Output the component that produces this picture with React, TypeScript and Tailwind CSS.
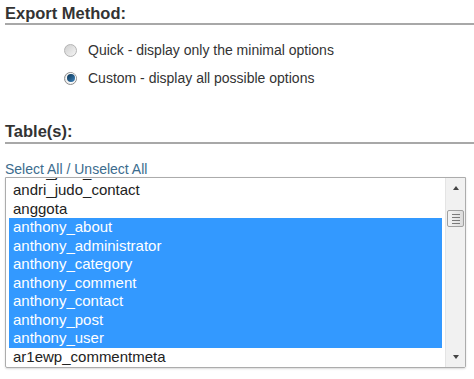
import React from "react";

const TABLES = [
  { name: "andri_judo_about", selected: false },
  { name: "andri_judo_contact", selected: false },
  { name: "anggota", selected: false },
  { name: "anthony_about", selected: true },
  { name: "anthony_administrator", selected: true },
  { name: "anthony_category", selected: true },
  { name: "anthony_comment", selected: true },
  { name: "anthony_contact", selected: true },
  { name: "anthony_post", selected: true },
  { name: "anthony_user", selected: true },
  { name: "ar1ewp_commentmeta", selected: false },
];

function Radio({ checked }: { checked?: boolean }) {
  return (
    <span
      className={`w-[13px] h-[13px] rounded-full border flex items-center justify-center shrink-0 ${
        checked
          ? "border-[#8c8c8c] bg-gradient-to-br from-[#e2e2e2] to-[#fafafa]"
          : "border-[#b4b4b4] bg-gradient-to-br from-[#cfcfcf] to-[#f6f6f6]"
      }`}
    >
      {checked && (
        <span className="w-[8px] h-[8px] rounded-full bg-gradient-to-br from-[#0c3554] to-[#3f86c0] shadow-[0_0_0_1px_rgba(255,255,255,0.8)]" />
      )}
    </span>
  );
}

function Scrollbar() {
  return (
    <div className="w-[20px] h-full bg-[#f1f1f1] border-l border-[#e4e4e4] flex flex-col items-center">
      <div className="h-[20px] w-full flex items-center justify-center">
        <span className="w-0 h-0 border-l-[3px] border-r-[3px] border-b-[4px] border-l-transparent border-r-transparent border-b-[#444]" />
      </div>
      <div className="mt-[12px] w-[17px] h-[17px] rounded-[2px] border border-[#a0a0a0] bg-gradient-to-r from-[#f4f4f4] to-[#dcdcdc] flex flex-col items-center justify-center gap-[2px]">
        <span className="w-[8px] h-px bg-[#7a7a7a]" />
        <span className="w-[8px] h-px bg-[#7a7a7a]" />
        <span className="w-[8px] h-px bg-[#7a7a7a]" />
        <span className="w-[8px] h-px bg-[#7a7a7a]" />
      </div>
      <div className="flex-1" />
      <div className="h-[20px] w-full flex items-center justify-center">
        <span className="w-0 h-0 border-l-[3px] border-r-[3px] border-t-[4px] border-l-transparent border-r-transparent border-t-[#444]" />
      </div>
    </div>
  );
}

export default function App() {
  return (
    <div className="w-[474px] h-[379px] bg-white overflow-hidden font-['Liberation_Sans',Arial,sans-serif] pl-[5px]">
      {/* Export method */}
      <h2 className="pt-[3px] text-[16.5px] leading-[20px] font-bold text-[#333] border-b-2 border-[#a8a8a8]">
        Export Method:
      </h2>
      <div className="mt-[11px] pl-[59px] text-[14px] text-[#333]">
        <label className="h-[28px] flex items-center gap-[11px]">
          <Radio />
          <span>Quick - display only the minimal options</span>
        </label>
        <label className="h-[28px] flex items-center gap-[11px]">
          <Radio checked />
          <span>Custom - display all possible options</span>
        </label>
      </div>

      {/* Tables */}
      <h2 className="mt-[29px] pb-px text-[16.5px] leading-[20px] font-bold text-[#333] border-b-2 border-[#a8a8a8]">
        Table(s):
      </h2>
      <a href="#" className="mt-[17px] block text-[14px] leading-[16px] text-[#3c6c8e]">
        Select All / Unselect All
      </a>
      <div className="w-[461px] h-[191px] border border-[#acacac] rounded-b-[2px] shadow-[0_1px_2px_rgba(0,0,0,0.15)] flex overflow-hidden">
        <div className="flex-1 overflow-hidden pl-[3px] pr-[3px]">
          <ul className="-mt-[15.5px] text-[15px] leading-[18.5px]">
            {TABLES.map((t) => (
              <li
                key={t.name}
                className={`pl-[4px] h-[18.5px] whitespace-nowrap ${
                  t.selected ? "bg-[#3399ff] text-white" : "text-[#222]"
                }`}
              >
                {t.name}
              </li>
            ))}
          </ul>
        </div>
        <Scrollbar />
      </div>
    </div>
  );
}
